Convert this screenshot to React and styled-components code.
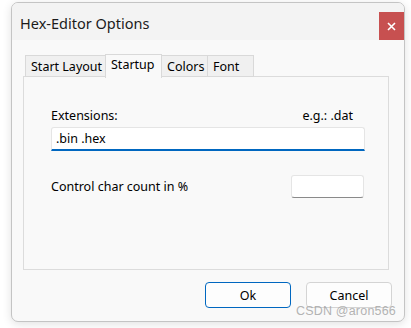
import React from 'react';
import styled, { createGlobalStyle } from 'styled-components';

const GlobalStyle = createGlobalStyle`
  html, body {
    margin: 0;
    padding: 0;
    background: #ffffff;
  }
  body {
    font-family: "Noto Sans", "Open Sans", sans-serif;
    color: #000;
  }
`;

const Stage = styled.div`
  width: 411px;
  height: 328px;
  box-sizing: border-box;
  padding: 2px 6px 6px 11px;
`;

const Window = styled.div`
  position: relative;
  width: 394px;
  height: 320px;
  box-sizing: border-box;
  border: 1px solid #c4c4c4;
  border-radius: 7px;
  background: #f9f9f9;
  box-shadow: 0 2px 10px rgba(0, 0, 0, 0.12);
  display: flex;
  flex-direction: column;
  overflow: hidden;
`;

const TitleBar = styled.div`
  height: 37px;
  flex: none;
  background: #f3f3f3;
  display: flex;
  align-items: flex-end;
  justify-content: space-between;
`;

const Title = styled.div`
  align-self: center;
  margin-left: 8px;
  margin-top: 2px;
  font-size: 14.5px;
  color: #1b1b1b;
`;

const CloseButton = styled.div`
  width: 25px;
  height: 28px;
  background: #c75050;
  color: #fff;
  display: flex;
  align-items: center;
  justify-content: center;
`;

const Body = styled.div`
  flex: 1;
  display: flex;
  flex-direction: column;
  padding: 14px 15px 0 11px;
`;

const TabRow = styled.div`
  display: flex;
  align-items: flex-end;
  height: 23px;
  padding-left: 3px;
  position: relative;
  z-index: 1;
`;

const Tab = styled.div`
  box-sizing: border-box;
  flex: none;
  width: ${({ $width }) => $width}px;
  height: ${({ $active }) => ($active ? '24px' : '22px')};
  margin-bottom: ${({ $active }) => ($active ? '-1px' : '0')};
  padding: ${({ $active }) => ($active ? '1px 0 0 5px' : '2px 0 0 5px')};
  border: 1px solid #d9d9d9;
  border-bottom: ${({ $active }) => ($active ? 'none' : '1px solid #d9d9d9')};
  margin-left: -1px;
  background: ${({ $active }) => ($active ? '#f9f9f9' : '#f0f0f0')};
  font-size: 12.5px;
  line-height: 18px;
  white-space: nowrap;
  overflow: hidden;
`;

const Panel = styled.div`
  box-sizing: border-box;
  height: 194px;
  border: 1px solid #dcdcdc;
  margin-top: -1px;
  background: #f9f9f9;
  padding: 31px 23px 0 27px;
`;

const LabelRow = styled.div`
  display: flex;
  justify-content: space-between;
  font-size: 12.5px;
  line-height: 16px;
  padding-right: 12px;
`;

const TextInput = styled.div`
  box-sizing: border-box;
  height: 24px;
  margin-top: 3px;
  background: #ffffff;
  border: 1px solid #e5e5e5;
  border-bottom: 2px solid #0067c0;
  border-radius: 3px 3px 0 0;
  padding: 0 4px;
  font-size: 12.5px;
  line-height: 21px;
`;

const CountRow = styled.div`
  display: flex;
  align-items: center;
  justify-content: space-between;
  margin-top: 24px;
  padding-right: 1px;
  font-size: 12.5px;
`;

const SmallInput = styled.div`
  box-sizing: border-box;
  width: 73px;
  height: 23px;
  background: #ffffff;
  border: 1px solid #e5e5e5;
  border-bottom: 1px solid #8a8a8a;
  border-radius: 3px;
`;

const Footer = styled.div`
  display: flex;
  justify-content: flex-end;
  gap: 15px;
  margin-top: 12px;
  margin-right: -3px;
`;

const Button = styled.div`
  box-sizing: border-box;
  width: 86px;
  height: 26px;
  border-radius: 4px;
  border: 1px solid ${({ $primary }) => ($primary ? '#0067c0' : '#d4d4d4')};
  background: #fdfdfd;
  display: flex;
  align-items: center;
  justify-content: center;
  font-size: 12.5px;
`;

const Watermark = styled.div`
  position: absolute;
  right: 8px;
  bottom: 3px;
  font-family: "Liberation Sans", Arial, sans-serif;
  font-size: 12.5px;
  color: rgba(160, 160, 160, 0.8);
  letter-spacing: 0.2px;
`;

export default function App() {
  return (
    <Stage>
      <GlobalStyle />
      <Window>
        <TitleBar>
          <Title>Hex-Editor Options</Title>
          <CloseButton>
            <svg width="9" height="9" viewBox="0 0 9 9">
              <path d="M1 1 L8 8 M8 1 L1 8" stroke="#fff" strokeWidth="1.6" />
            </svg>
          </CloseButton>
        </TitleBar>
        <Body>
          <TabRow>
            <Tab $width={81}>Start Layout</Tab>
            <Tab $active $width={57}>Startup</Tab>
            <Tab $width={47}>Colors</Tab>
            <Tab $width={47}>Font</Tab>
          </TabRow>
          <Panel>
            <LabelRow>
              <span>Extensions:</span>
              <span>e.g.: .dat</span>
            </LabelRow>
            <TextInput>.bin .hex</TextInput>
            <CountRow>
              <span>Control char count in %</span>
              <SmallInput />
            </CountRow>
          </Panel>
          <Footer>
            <Button $primary>Ok</Button>
            <Button>Cancel</Button>
          </Footer>
        </Body>
        <Watermark>CSDN @aron566</Watermark>
      </Window>
    </Stage>
  );
}
